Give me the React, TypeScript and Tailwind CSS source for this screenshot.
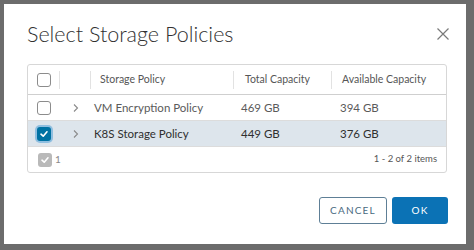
import React from 'react';

type Policy = {
  name: string;
  total: string;
  available: string;
  selected: boolean;
};

const policies: Policy[] = [
  { name: 'VM Encryption Policy', total: '469 GB', available: '394 GB', selected: false },
  { name: 'K8S Storage Policy', total: '449 GB', available: '376 GB', selected: true },
];

const CheckIcon = () => (
  <svg width="10" height="10" viewBox="0 0 10 10" fill="none">
    <path d="M2 5.2 L4.2 7.2 L8 2.8" stroke="white" strokeWidth="1.6" strokeLinecap="round" strokeLinejoin="round" />
  </svg>
);

const Checkbox = ({ checked, muted }: { checked: boolean; muted?: boolean }) => {
  if (checked) {
    return (
      <span
        className={`flex h-[14px] w-[14px] items-center justify-center rounded-[3px] ${
          muted ? 'bg-[#b9b9b9]' : 'bg-[#0072a3] ring-2 ring-[#5ea5d8]/60'
        }`}
      >
        <CheckIcon />
      </span>
    );
  }
  return <span className="block h-[14px] w-[14px] rounded-[3px] border border-[#8c8c8c] bg-white" />;
};

const Chevron = () => (
  <svg width="8" height="10" viewBox="0 0 8 10" fill="none">
    <path d="M2 1.5 L5.5 5 L2 8.5" stroke="#8a8a8a" strokeWidth="1.1" />
  </svg>
);

const App: React.FC = () => {
  return (
    <div
      className="h-[250px] w-[474px] bg-[#6c6c6c] pl-[4px] pt-[4px]"
      style={{ fontFamily: 'Lato, "Open Sans", sans-serif' }}
    >
      <div className="flex h-[240px] w-[462px] flex-col bg-white">
        <div className="flex items-center justify-between pl-[23px] pr-[17px] pt-[15px]">
          <h1 className="text-[21.5px] font-light leading-[30px] text-[#313131]">Select Storage Policies</h1>
          <svg width="12" height="12" viewBox="0 0 12 12" fill="none">
            <path d="M0.5 0.5 L11.5 11.5 M11.5 0.5 L0.5 11.5" stroke="#7a7a7a" strokeWidth="1.2" />
          </svg>
        </div>

        <div className="ml-[23px] mt-[15px] w-[420px] rounded-[3px] border border-[#d7d7d7] text-[#565656]">
          <div className="flex h-[30px] items-center border-b border-[#cfcfcf] text-[10.5px]">
            <div className="flex h-full w-[31px] items-center justify-center">
              <Checkbox checked={false} />
            </div>
            <div className="h-[18px] w-[31px] border-l border-[#e2e2e2]" />
            <div className="flex h-[18px] w-[143px] items-center border-l border-[#e2e2e2] pl-[9px]">Storage Policy</div>
            <div className="flex h-[18px] w-[98px] items-center border-l border-[#e2e2e2] pl-[11px]">Total Capacity</div>
            <div className="flex h-[18px] flex-1 items-center border-l border-[#e2e2e2] pl-[10px]">Available Capacity</div>
          </div>

          {policies.map((p) => (
            <div
              key={p.name}
              className={`flex h-[26px] items-center border-b border-[#dcdcdc] text-[11.5px] ${
                p.selected ? 'bg-[#dde5ec] text-[#2f2f2f]' : 'text-[#5a5a5a]'
              }`}
            >
              <div className="flex w-[31px] justify-center">
                <Checkbox checked={p.selected} />
              </div>
              <div className="flex w-[31px] justify-center pl-[2px]">
                <Chevron />
              </div>
              <div className="w-[143px] pl-[4px]">{p.name}</div>
              <div className="w-[98px] pl-[8px]">{p.total}</div>
              <div className="flex-1 pl-[9px]">{p.available}</div>
            </div>
          ))}

          <div className="flex h-[25px] items-center justify-between pl-[10px] pr-[9px]">
            <div className="flex items-center gap-[3px] text-[10px] text-[#8a8a8a]">
              <Checkbox checked muted />
              <span>1</span>
            </div>
            <span className="text-[9.5px] text-[#565656]">1 - 2 of 2 items</span>
          </div>
        </div>

        <div className="mt-auto flex justify-end gap-[5px] pb-[20px] pr-[18px]">
          <button className="h-[27px] w-[68px] rounded-[3px] border border-[#5e7f96] bg-white text-[10px] tracking-[1.2px] text-[#4a6a80]">
            CANCEL
          </button>
          <button className="h-[27px] w-[56px] rounded-[3px] bg-[#0b72b5] text-[10px] tracking-[1.2px] text-white">
            OK
          </button>
        </div>
      </div>
    </div>
  );
};

export default App;
